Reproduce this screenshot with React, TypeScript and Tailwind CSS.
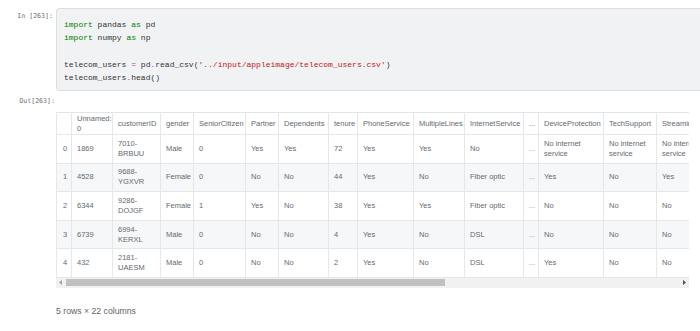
import React from "react";

const cols = [
  { name: "", w: "w-[15px]" },
  { name: "Unnamed: 0", w: "w-[41px]" },
  { name: "customerID", w: "w-[48px]" },
  { name: "gender", w: "w-[33px]" },
  { name: "SeniorCitizen", w: "w-[52px]" },
  { name: "Partner", w: "w-[33px]" },
  { name: "Dependents", w: "w-[50px]" },
  { name: "tenure", w: "w-[29px]" },
  { name: "PhoneService", w: "w-[56px]" },
  { name: "MultipleLines", w: "w-[51px]" },
  { name: "InternetService", w: "w-[59px]" },
  { name: "...", w: "w-[15px]" },
  { name: "DeviceProtection", w: "w-[65px]" },
  { name: "TechSupport", w: "w-[53px]" },
  { name: "StreamingTV", w: "w-[60px]" },
];

const rows = [
  ["0", "1869", "7010-BRBUU", "Male", "0", "Yes", "Yes", "72", "Yes", "Yes", "No", "...", "No internet service", "No internet service", "No internet service"],
  ["1", "4528", "9688-YGXVR", "Female", "0", "No", "No", "44", "Yes", "No", "Fiber optic", "...", "Yes", "No", "Yes"],
  ["2", "6344", "9286-DOJGF", "Female", "1", "Yes", "No", "38", "Yes", "Yes", "Fiber optic", "...", "No", "No", "No"],
  ["3", "6739", "6994-KERXL", "Male", "0", "No", "No", "4", "Yes", "No", "DSL", "...", "No", "No", "No"],
  ["4", "432", "2181-UAESM", "Male", "0", "No", "No", "2", "Yes", "No", "DSL", "...", "Yes", "No", "No"],
];

const Kw = ({ children }: { children: React.ReactNode }) => (
  <span className="text-[#008000]">{children}</span>
);
const Op = ({ children }: { children: React.ReactNode }) => (
  <span className="text-[#9b3fd6]">{children}</span>
);
const Str = ({ children }: { children: React.ReactNode }) => (
  <span className="text-[#ba2121]">{children}</span>
);

const App = () => {
  return (
    <div className="w-[700px] h-[331px] bg-white overflow-hidden font-['Liberation_Sans',Arial,sans-serif]">
      {/* input cell */}
      <div className="flex pt-[8px]">
        <div className="w-[56px] shrink-0 pr-[3px] pt-[3px] text-right font-['DejaVu_Sans_Mono',monospace] text-[6.6px] leading-[10px] text-[#6e6e6e]">
          In&nbsp;[263]:
        </div>
        <div className="flex-1 h-[83px] bg-[#f1f2f4] border-y border-l border-[#dcdee2] rounded-l-[4px] pl-[7px] pt-[9px] font-['Liberation_Mono',monospace] text-[8px] leading-[13.3px] text-[#333] whitespace-pre">
          <div>
            <Kw>import</Kw> pandas <Kw>as</Kw> pd
          </div>
          <div>
            <Kw>import</Kw> numpy <Kw>as</Kw> np
          </div>
          <div>&nbsp;</div>
          <div>
            telecom_users <Op>=</Op> pd<Op>.</Op>read_csv(<Str>'../input/appleimage/telecom_users.csv'</Str>)
          </div>
          <div>
            telecom_users<Op>.</Op>head()
          </div>
        </div>
      </div>

      {/* output prompt */}
      <div className="w-[56px] mt-[5px] pr-[1px] text-right font-['DejaVu_Sans_Mono',monospace] text-[6.6px] leading-[10px] text-[#6e6e6e]">
        Out[263]:
      </div>

      {/* dataframe */}
      <div className="ml-[56px] mt-[6px] w-[633px] overflow-hidden">
        <table className="table-fixed border-collapse w-[660px] text-[7.5px] leading-[10px] text-[#646a70]">
          <thead>
            <tr className="h-[22px] border-t border-[#e3e4e6]">
              {cols.map((c, i) => (
                <th
                  key={i}
                  className={`${c.w} font-normal text-left align-middle px-[5px] border-l border-r border-b border-[#e6e7e9] ${i === 0 ? "pl-[6px]" : ""}`}
                >
                  {c.name === "Unnamed: 0" ? (
                    <>
                      Unnamed:
                      <br />0
                    </>
                  ) : (
                    c.name
                  )}
                </th>
              ))}
            </tr>
          </thead>
          <tbody>
            {rows.map((r, ri) => (
              <tr
                key={ri}
                className={`h-[28.6px] ${ri % 2 === 1 ? "bg-[#f6f7f8]" : "bg-white"}`}
              >
                {r.map((v, ci) => (
                  <td
                    key={ci}
                    className={`align-middle px-[5px] border border-[#e6e7e9] ${ci === 0 ? "pl-[6px]" : ""} ${v === "..." ? "text-[#9a9a9a]" : ""}`}
                  >
                    {v.includes("-") && ci === 2 ? (
                      <>
                        {v.split("-")[0]}-
                        <br />
                        {v.split("-")[1]}
                      </>
                    ) : v === "No internet service" ? (
                      <>
                        No internet
                        <br />
                        service
                      </>
                    ) : (
                      v
                    )}
                  </td>
                ))}
              </tr>
            ))}
          </tbody>
        </table>
        {/* horizontal scrollbar */}
        <div className="flex items-center h-[10px] bg-[#f1f1f1]">
          <div className="w-[10px] flex justify-center">
            <svg width="4" height="5" viewBox="0 0 4 5">
              <path d="M3 0 L0 2.5 L3 5 Z" fill="#a3a3a3" />
            </svg>
          </div>
          <div className="w-[379px] h-[7px] bg-[#c1c1c1]" />
          <div className="flex-1" />
          <div className="w-[10px] flex justify-center">
            <svg width="4" height="5" viewBox="0 0 4 5">
              <path d="M1 0 L4 2.5 L1 5 Z" fill="#505050" />
            </svg>
          </div>
        </div>
      </div>

      <div className="ml-[56px] mt-[17px] text-[8.7px] leading-[12px] text-[#5f6368]">
        5 rows × 22 columns
      </div>
    </div>
  );
};

export default App;
